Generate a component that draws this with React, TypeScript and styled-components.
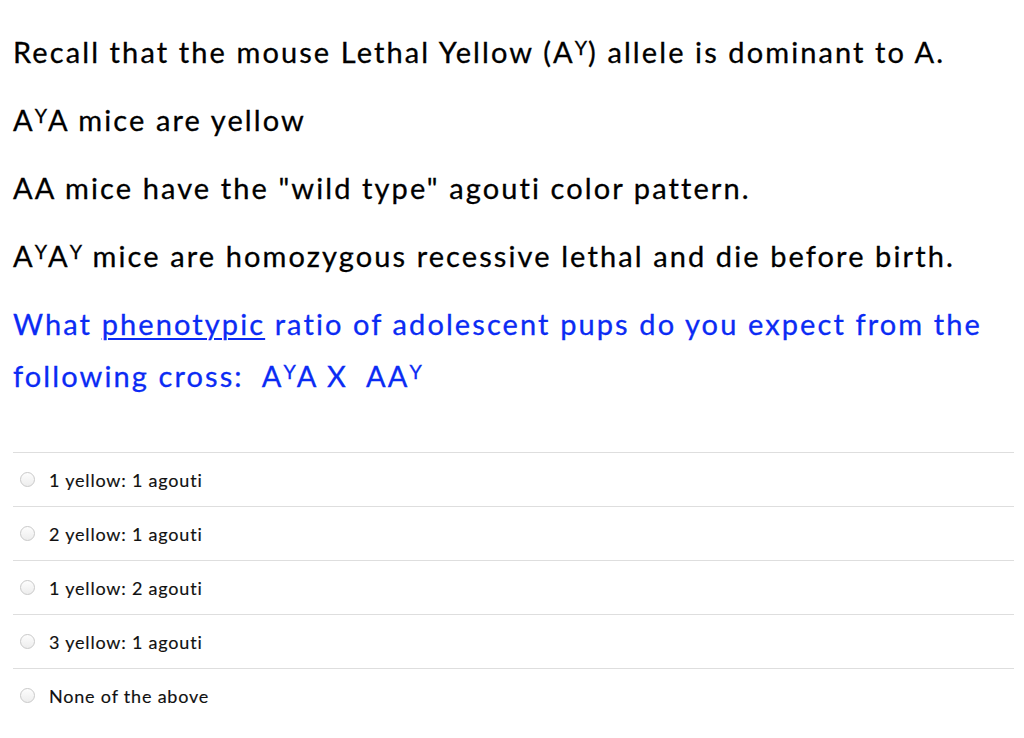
import React from "react";
import styled, { createGlobalStyle } from "styled-components";

const Global = createGlobalStyle`
  html, body { margin: 0; padding: 0; background: #ffffff; }
  body { font-family: Lato, "Open Sans", sans-serif; color: #000; }
`;

const Page = styled.div`
  padding: 26px 10px 0 13px;
`;

const Para = styled.p<{ $blue?: boolean }>`
  margin: 0 0 16px 0;
  font-size: 29px;
  line-height: 52px;
  letter-spacing: 2.1px;
  -webkit-text-stroke: 0.3px currentColor;
  color: ${(p) => (p.$blue ? "#0b2bf4" : "#000")};
`;

const Sup = styled.span`
  font-size: 0.68em;
  vertical-align: 0.42em;
  line-height: 0;
  letter-spacing: 1px;
`;

const Under = styled.span`
  text-decoration: underline;
  text-decoration-thickness: 2px;
  text-underline-offset: 3px;
`;

const Options = styled.div`
  margin-top: 50px;
  width: 1001px;
`;

const Row = styled.label`
  display: flex;
  align-items: center;
  height: 53px;
  border-top: 1px solid #dedede;
  gap: 14px;
  padding-left: 7px;
  font-size: 18px;
  letter-spacing: 0.8px;
  -webkit-text-stroke: 0.15px currentColor;
  color: #111;
`;

const Radio = styled.span`
  display: block;
  width: 13px;
  height: 13px;
  border-radius: 50%;
  border: 1px solid #c9c9c9;
  background: linear-gradient(#fdfdfd, #ededed);
`;

const options = [
  "1 yellow: 1 agouti",
  "2 yellow: 1 agouti",
  "1 yellow: 2 agouti",
  "3 yellow: 1 agouti",
  "None of the above",
];

export default function App() {
  return (
    <Page>
      <Global />
      <Para>
        Recall that the mouse Lethal Yellow (A<Sup>Y</Sup>) allele is dominant to A.
      </Para>
      <Para>
        A<Sup>Y</Sup>A mice are yellow
      </Para>
      <Para>AA mice have the "wild type" agouti color pattern.</Para>
      <Para>
        A<Sup>Y</Sup>A<Sup>Y</Sup> mice are homozygous recessive lethal and die before birth.
      </Para>
      <Para $blue>
        What <Under>phenotypic</Under> ratio of adolescent pups do you expect from the following
        cross:&nbsp; A<Sup>Y</Sup>A X&nbsp; AA<Sup>Y</Sup>
      </Para>
      <Options>
        {options.map((o) => (
          <Row key={o}>
            <Radio />
            {o}
          </Row>
        ))}
      </Options>
    </Page>
  );
}
